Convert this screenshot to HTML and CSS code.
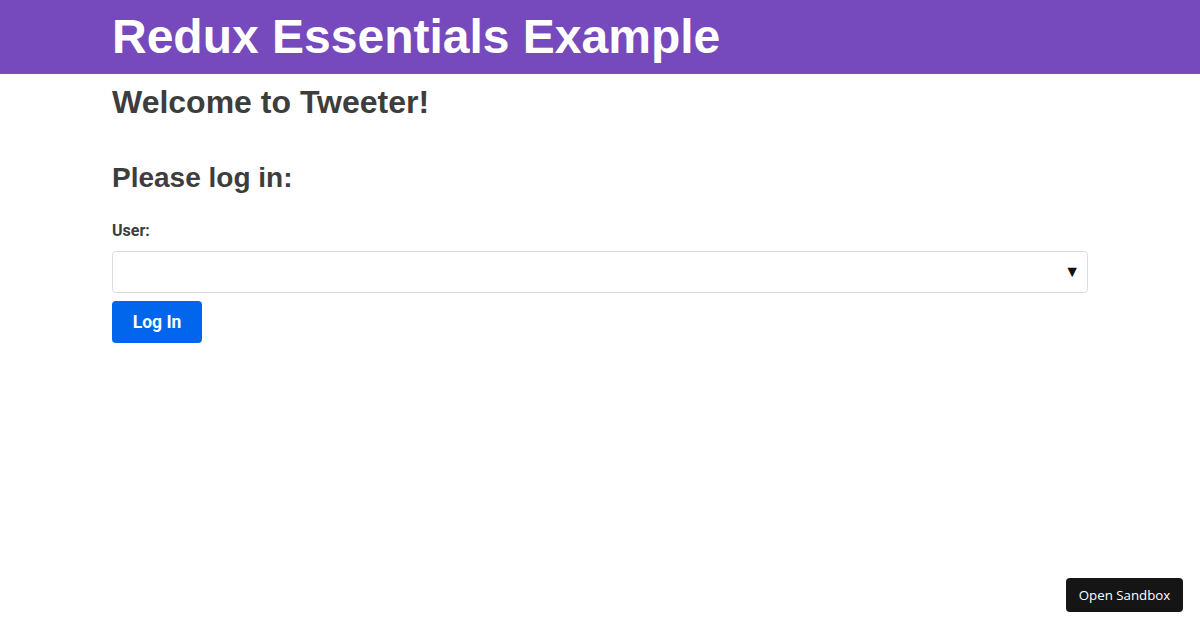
FILE: index.html
```html
<!DOCTYPE html>
<html>
<head>
<meta charset="utf-8">
<link rel="stylesheet" href="styles.css">
</head>
<body>
<nav class="navbar">
  <section class="container">
    <h1 class="title">Redux Essentials Example</h1>
  </section>
</nav>
<main class="container">
  <h2 class="welcome">Welcome to Tweeter!</h2>
  <h3 class="login-title">Please log in:</h3>
  <form class="login-form">
    <label class="label" for="username">User:</label>
    <div class="select-wrap">
      <select id="username" class="select"><option value=""></option></select>
      <span class="arrow">▼</span>
    </div>
    <button class="button" type="button">Log In</button>
  </form>
</main>
<button class="sandbox" type="button">Open Sandbox</button>
</body>
</html>
```
FILE: styles.css
```css
html, body { margin: 0; padding: 0; background: #fff; }
body { font-family: Roboto, "Liberation Sans", sans-serif; color: #3d3d3d; }
.container { max-width: 976px; margin: 0 auto; }
.navbar { background: #764abc; height: 74px; }
.title {
  margin: 0; color: #fff; font-family: "Liberation Sans", Arial, sans-serif;
  font-size: 48px; font-weight: 700; line-height: 74px;
}
.welcome { margin: 6px 0 0; font-size: 32px; font-weight: 700; line-height: 44px; font-family: "Liberation Sans", Arial, sans-serif; }
.login-title { margin: 34px 0 0; font-size: 28px; font-weight: 700; line-height: 40px; font-family: "Liberation Sans", Arial, sans-serif; }
.login-form { display: flex; flex-direction: column; margin-top: 23px; }
.label { font-size: 16px; font-weight: 700; line-height: 20px; margin-bottom: 10px; }
.select-wrap { position: relative; height: 42px; margin-bottom: 8px; }
.select {
  width: 100%; height: 42px; box-sizing: border-box; border: 1px solid #dcdcdc;
  border-radius: 4px; background: #fff; appearance: none; -webkit-appearance: none;
  font-size: 16px;
}
.arrow { position: absolute; right: 8px; top: 11px; font-size: 16px; color: #111; pointer-events: none; }
.button {
  align-self: flex-start; width: 90px; height: 42px; border: none; border-radius: 4px;
  background: #0166ec; color: #fff; font-family: Roboto, sans-serif; font-weight: 700; font-size: 17.5px;
}
.sandbox {
  position: fixed; right: 17px; bottom: 18px; width: 117px; height: 34px; border: none;
  border-radius: 4px; background: #151515; color: #fff; font-family: "Open Sans", sans-serif; font-size: 13.3px; font-weight: 500;
}
```
